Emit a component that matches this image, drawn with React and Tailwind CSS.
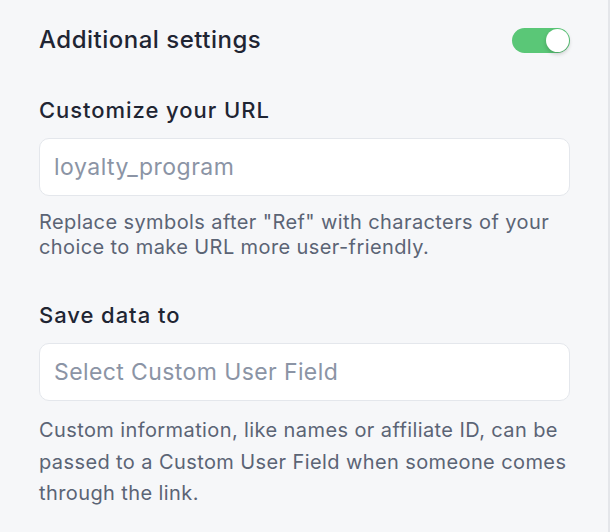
import React, { useState } from 'react';

const App = () => {
  const [enabled, setEnabled] = useState(true);

  return (
    <div
      className="w-[610px] h-[532px] bg-[#f6f7f9] border-r-2 border-[#e4e6ea] overflow-hidden"
      style={{ fontFamily: 'Inter, "Noto Sans", sans-serif' }}
    >
      <div className="pl-[39px] pr-[38px] pt-[23px]">
        <div className="flex items-center justify-between h-[34px]">
          <h2 className="text-[24px] font-medium text-[#1f2533] tracking-[0.5px]">Additional settings</h2>
          <button
            onClick={() => setEnabled(!enabled)}
            className={`w-[58px] h-[25px] rounded-full p-[1px] flex items-center ${enabled ? 'bg-[#5ac777] justify-end' : 'bg-gray-300 justify-start'}`}
          >
            <span className="w-[23px] h-[23px] rounded-full bg-white shadow-[0_2px_4px_rgba(0,0,0,0.2)]" />
          </button>
        </div>

        <h3 className="mt-[38px] text-[22px] font-medium text-[#1f2533] leading-[30px] tracking-[0.95px]">Customize your URL</h3>
        <input
          className="mt-[13px] w-full h-[58px] rounded-[10px] border border-[#e4e7ec] bg-white px-[14px] text-[23px] tracking-[0.5px] text-[#1f2533] placeholder:text-[#8b94a5] outline-none"
          placeholder="loyalty_program"
        />
        <p className="mt-[14px] text-[20px] leading-[25px] tracking-[0.4px] text-[#5b6475]">
          Replace symbols after "Ref" with characters of your choice to make URL more user-friendly.
        </p>

        <h3 className="mt-[40px] text-[22px] font-medium text-[#1f2533] leading-[30px] tracking-[0.95px]">Save data to</h3>
        <div className="mt-[13px] w-full h-[58px] rounded-[10px] border border-[#e4e7ec] bg-white px-[14px] flex items-center text-[23px] tracking-[0.4px] text-[#8b94a5]">
          Select Custom User Field
        </div>
        <p className="mt-[14px] text-[20px] leading-[31.5px] tracking-[0.4px] text-[#5b6475]">
          Custom information, like names or affiliate ID, can be passed to a Custom User Field when someone comes through the link.
        </p>
      </div>
    </div>
  );
};

export default App;
